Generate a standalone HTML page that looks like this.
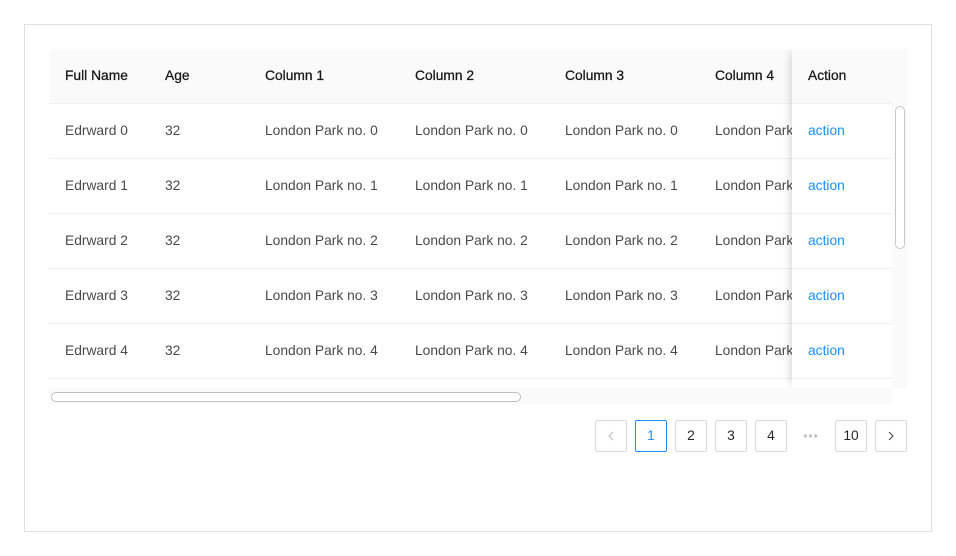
<!DOCTYPE html>
<html><head><style>
*{box-sizing:border-box;margin:0;padding:0}
body{width:956px;height:556px;background:#fff;font-family:"Liberation Sans",sans-serif;font-size:13.8px;color:rgba(0,0,0,.85);position:relative;overflow:hidden}
.outer{position:absolute;left:24px;top:24px;width:908px;height:508px;border:1px solid #e0e0e0}
.wrap{position:absolute;left:49px;top:49px;width:843px;height:339px;overflow:hidden}
.row{position:absolute;left:0;width:843px;height:55px;border-bottom:1px solid #f0f0f0}
.c{position:absolute;top:0;line-height:54px;white-space:nowrap;overflow:hidden}
.hd{background:#fafafa;color:rgba(0,0,0,.9);-webkit-text-stroke:0.3px rgba(0,0,0,.8)}
.bd .c{color:rgba(0,0,0,.72)}
.fix{position:absolute;left:743px;top:0;width:100px;height:339px;background:#fff;box-shadow:-6px 0 8px -4px rgba(0,0,0,.15)}
.pg{position:absolute;top:420px;width:32px;height:32px;border:1px solid #d9d9d9;border-radius:2px;text-align:center;line-height:30px;color:rgba(0,0,0,.85);background:#fff}
</style></head><body>
<div class="outer"></div>
<div style="position:absolute;left:892px;top:49px;width:15px;height:55px;background:#fafafa"></div>
<div style="position:absolute;left:892px;top:104px;width:15px;height:284px;background:#fafafa"></div>
<div style="position:absolute;left:895px;top:106px;width:10px;height:143px;border:1px solid #c8c8c8;border-radius:5px;background:#fff"></div>
<div class="wrap">
<div class="row hd" style="top:0">
<div class="c" style="left:16px">Full Name</div><div class="c" style="left:116px">Age</div><div class="c" style="left:216px">Column 1</div><div class="c" style="left:366px">Column 2</div><div class="c" style="left:516px">Column 3</div><div class="c" style="left:666px">Column 4</div>
</div>
<div class="row bd" style="top:55px"><div class="c" style="left:16px">Edrward 0</div><div class="c" style="left:116px">32</div><div class="c" style="left:216px">London Park no. 0</div><div class="c" style="left:366px">London Park no. 0</div><div class="c" style="left:516px">London Park no. 0</div><div class="c" style="left:666px">London Park no. 0</div></div>
<div class="row bd" style="top:110px"><div class="c" style="left:16px">Edrward 1</div><div class="c" style="left:116px">32</div><div class="c" style="left:216px">London Park no. 1</div><div class="c" style="left:366px">London Park no. 1</div><div class="c" style="left:516px">London Park no. 1</div><div class="c" style="left:666px">London Park no. 1</div></div>
<div class="row bd" style="top:165px"><div class="c" style="left:16px">Edrward 2</div><div class="c" style="left:116px">32</div><div class="c" style="left:216px">London Park no. 2</div><div class="c" style="left:366px">London Park no. 2</div><div class="c" style="left:516px">London Park no. 2</div><div class="c" style="left:666px">London Park no. 2</div></div>
<div class="row bd" style="top:220px"><div class="c" style="left:16px">Edrward 3</div><div class="c" style="left:116px">32</div><div class="c" style="left:216px">London Park no. 3</div><div class="c" style="left:366px">London Park no. 3</div><div class="c" style="left:516px">London Park no. 3</div><div class="c" style="left:666px">London Park no. 3</div></div>
<div class="row bd" style="top:275px"><div class="c" style="left:16px">Edrward 4</div><div class="c" style="left:116px">32</div><div class="c" style="left:216px">London Park no. 4</div><div class="c" style="left:366px">London Park no. 4</div><div class="c" style="left:516px">London Park no. 4</div><div class="c" style="left:666px">London Park no. 4</div></div>
<div class="fix">
<div class="row hd" style="width:100px;top:0"><div class="c" style="left:16px">Action</div></div>
<div class="row" style="width:100px;top:55px"><div class="c" style="left:16px;color:#1890ff">action</div></div>
<div class="row" style="width:100px;top:110px"><div class="c" style="left:16px;color:#1890ff">action</div></div>
<div class="row" style="width:100px;top:165px"><div class="c" style="left:16px;color:#1890ff">action</div></div>
<div class="row" style="width:100px;top:220px"><div class="c" style="left:16px;color:#1890ff">action</div></div>
<div class="row" style="width:100px;top:275px"><div class="c" style="left:16px;color:#1890ff">action</div></div>
</div>
</div>
<div style="position:absolute;left:49px;top:388px;width:843px;height:16px;background:#fafafa"></div>
<div style="position:absolute;left:51px;top:392px;width:470px;height:10px;border:1px solid #c0c0c0;border-radius:5px;background:#fff"></div>
<div class="pg" style="left:595px;color:#bbb">
<svg width="10" height="10" viewBox="0 0 10 10" style="margin-top:10px"><path d="M7 1L3 5l4 4" fill="none" stroke="#bfbfbf" stroke-width="1.2"/></svg></div>
<div class="pg" style="left:635px;border-color:#1890ff;color:#1890ff">1</div>
<div class="pg" style="left:675px">2</div>
<div class="pg" style="left:715px">3</div>
<div class="pg" style="left:755px">4</div>
<div style="position:absolute;left:795px;top:421px;width:32px;line-height:30px;text-align:center;color:#bfbfbf;letter-spacing:1px;font-size:12px">•••</div>
<div class="pg" style="left:835px">10</div>
<div class="pg" style="left:875px"><svg width="10" height="10" viewBox="0 0 10 10" style="margin-top:10px"><path d="M3 1l4 4-4 4" fill="none" stroke="#555" stroke-width="1.2"/></svg></div>
</body></html>
